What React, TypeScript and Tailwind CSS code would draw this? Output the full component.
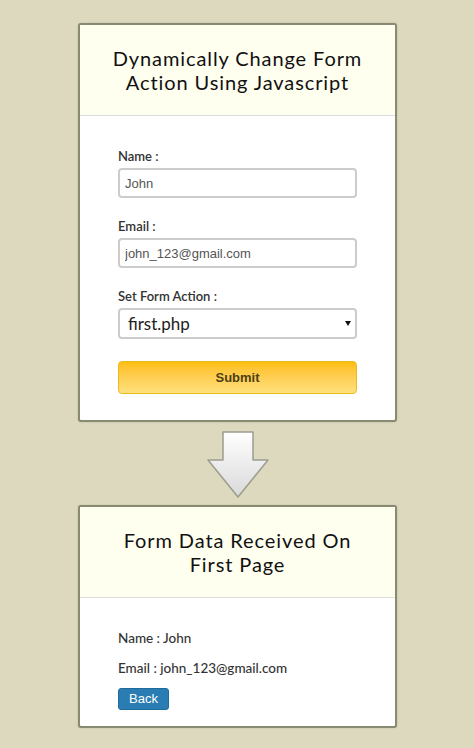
import React from "react";

const raleway = { fontFamily: "Lato, 'Open Sans', sans-serif" };

function DownArrow() {
  return (
    <svg width="62" height="68" viewBox="0 0 62 68" className="block">
      <defs>
        <linearGradient id="arrowFill" x1="0" y1="0" x2="0" y2="1">
          <stop offset="0" stopColor="#ffffff" />
          <stop offset="1" stopColor="#d9d9d9" />
        </linearGradient>
      </defs>
      <path
        d="M16 1 H46 V29 H61 L31 66 L1 29 H16 Z"
        fill="url(#arrowFill)"
        stroke="#9c9d8e"
        strokeWidth="1.5"
        strokeLinejoin="round"
      />
    </svg>
  );
}

function Card({ title, children }: { title: React.ReactNode; children: React.ReactNode }) {
  return (
    <div className="w-[319px] rounded-[3px] border-2 border-[#888a72] bg-white shadow-[0_0_2px_rgba(0,0,0,0.15)]">
      <div
        className="flex h-[91px] items-center justify-center border-b border-[#dddddd] bg-[#fffff0] text-center text-[20px] leading-[24px] tracking-[0.9px] text-[#111]"
        style={raleway}
      >
        {title}
      </div>
      {children}
    </div>
  );
}

export default function App() {
  return (
    <div className="flex min-h-[748px] flex-col items-center bg-[#ddd9bf] pt-[23px]">
      <div className="pl-[1px]">
        <Card
          title={
            <div>
              Dynamically Change Form
              <br />
              Action Using Javascript
            </div>
          }
        >
          <form className="flex flex-col px-[38px] pt-[31px] pb-[26px]">
            <label className="text-[13px] font-semibold leading-[18px] text-[#333]" style={raleway}>
              Name :
            </label>
            <input
              readOnly
              value="John"
              className="mt-[3px] h-[30px] w-[239px] rounded-[4px] border-2 border-[#cccccc] px-[5px] text-[13px] text-[#555]"
              style={{ fontFamily: "'Liberation Sans', Arial, sans-serif" }}
            />

            <label className="mt-[19px] text-[13px] font-semibold leading-[18px] text-[#333]" style={raleway}>
              Email :
            </label>
            <input
              readOnly
              value="john_123@gmail.com"
              className="mt-[3px] h-[30px] w-[239px] rounded-[4px] border-2 border-[#cccccc] px-[5px] text-[13px] text-[#555]"
              style={{ fontFamily: "'Liberation Sans', Arial, sans-serif" }}
            />

            <label className="mt-[19px] text-[13px] font-semibold leading-[18px] text-[#333]" style={raleway}>
              Set Form Action :
            </label>
            <div className="relative mt-[3px] w-[239px]">
              <select
                className="h-[31px] w-full appearance-none rounded-[4px] border-2 border-[#cccccc] bg-white pl-[8px] text-[17px] text-[#222]"
                style={{ fontFamily: "Lato, 'DejaVu Sans', sans-serif" }}
                defaultValue="first.php"
              >
                <option>first.php</option>
                <option>second.php</option>
              </select>
              <svg
                width="6"
                height="5"
                viewBox="0 0 6 5"
                className="pointer-events-none absolute right-[6px] top-[13px]"
              >
                <path d="M0 0 H6 L3 5 Z" fill="#111" />
              </svg>
            </div>

            <button
              type="button"
              className="mt-[22px] h-[33px] w-[239px] rounded-[4px] border border-[#e9bb22] bg-gradient-to-b from-[#ffbe00] to-[#ffe07c] text-[13px] font-bold text-[#4d3f14]"
              style={{ fontFamily: "'Liberation Sans', Arial, sans-serif" }}
            >
              Submit
            </button>
          </form>
        </Card>
      </div>

      <div className="mt-[9px] mb-[6px] pl-[1px]">
        <DownArrow />
      </div>

      <div className="pl-[1px]">
        <Card
          title={
            <div>
              Form Data Received On
              <br />
              First Page
            </div>
          }
        >
          <div className="flex flex-col px-[38px] pt-[31px] pb-[16px] text-[13.5px] text-[#333]" style={raleway}>
            <div className="leading-[18px] font-medium">Name : John</div>
            <div className="mt-[12px] leading-[18px] font-medium">Email : john_123@gmail.com</div>
            <button
              type="button"
              className="mt-[11px] h-[22px] w-[51px] rounded-[3px] border border-[#1e6b9c] bg-[#2a7db3] text-[13px] text-white"
              style={{ fontFamily: "'Liberation Sans', Arial, sans-serif" }}
            >
              Back
            </button>
          </div>
        </Card>
      </div>
    </div>
  );
}
